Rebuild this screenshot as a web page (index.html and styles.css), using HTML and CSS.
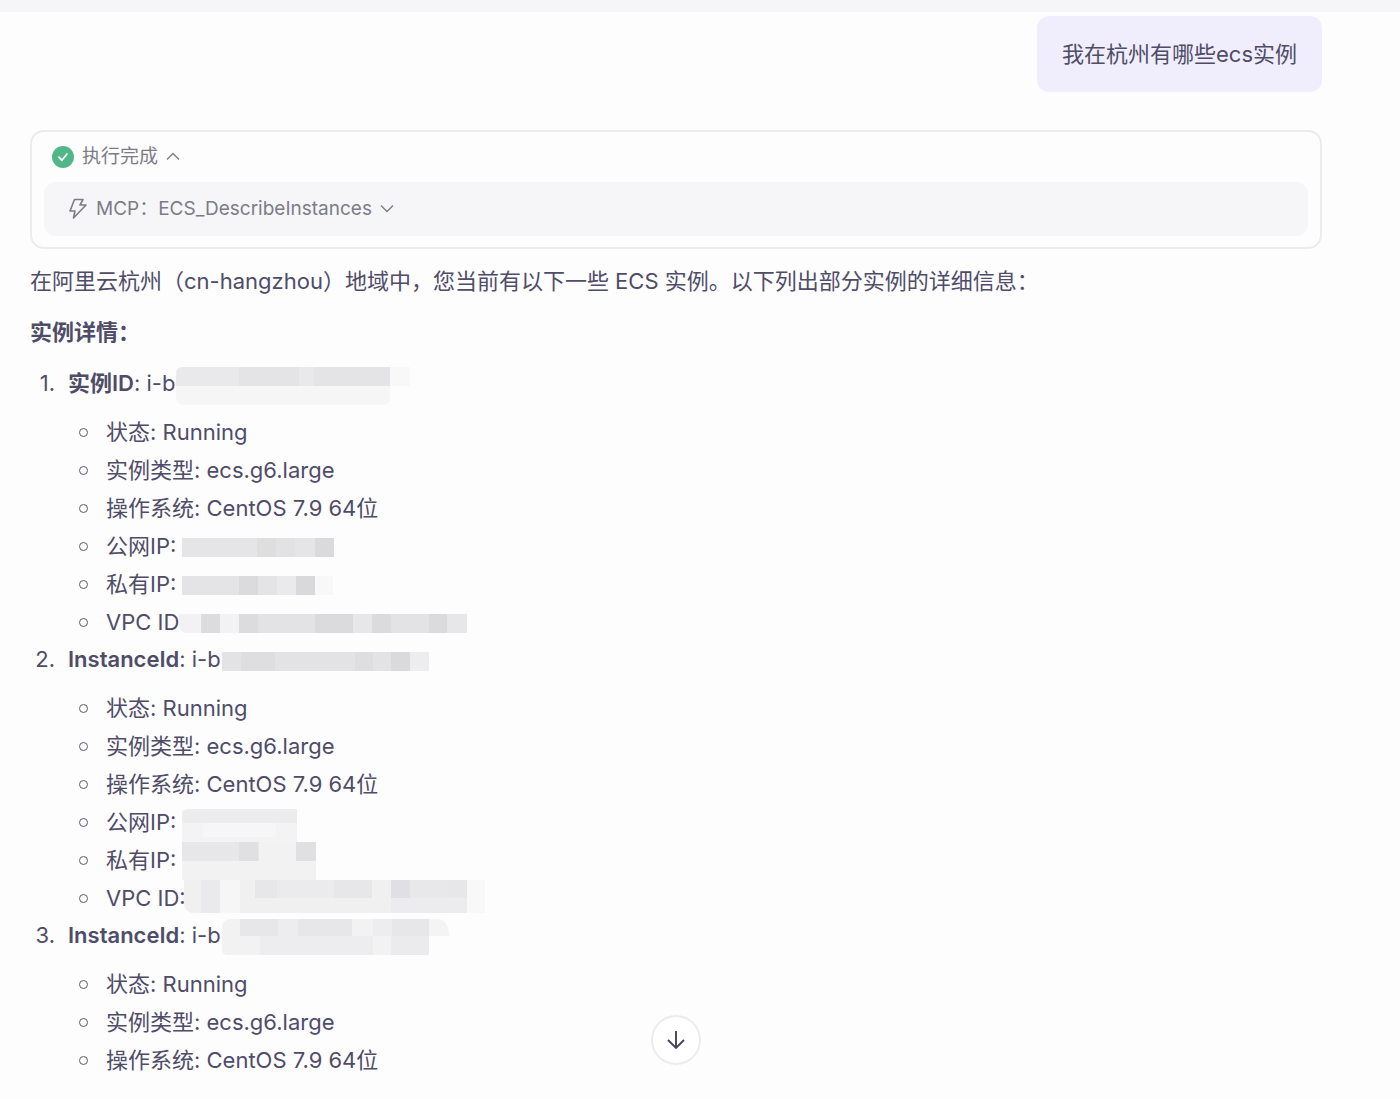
FILE: index.html
```html
<!DOCTYPE html>
<html lang="zh-CN">
<head>
<meta charset="UTF-8" />
<meta name="viewport" content="width=device-width, initial-scale=1" />
<title>ECS 实例</title>
<link rel="stylesheet" href="styles.css">
</head>
<body>

<header class="topbar"></header>

<main class="chat">
  <div class="question">我在杭州有哪些ecs实例</div>

  <section class="tool-card">
    <button class="status" type="button">
      <svg width="22" height="22" viewBox="0 0 22 22"><circle cx="11" cy="11" r="11" fill="#52b788"/><path d="M6.500 10.700l3.400 3.500 5.500-6.700" fill="none" stroke="#fff" stroke-width="1.700"/></svg>
      <span>执行完成</span>
      <svg width="14" height="14" viewBox="0 0 14 14"><path d="M1 9.500l6-6 6 6" fill="none" stroke="#7d7c86" stroke-width="1.400"/></svg>
    </button>
    <button class="tool" type="button">
      <svg width="20" height="22" viewBox="0 0 20 22"><path d="M6.500 1.500h8.500l-3 5.500h6L5.500 20l1.500-7H2z" fill="none" stroke="#7d7c86" stroke-width="1.600" stroke-linejoin="round"/></svg>
      <span>MCP：ECS_DescribeInstances</span>
      <svg width="14" height="14" viewBox="0 0 14 14"><path d="M1 3.500l6 6 6-6" fill="none" stroke="#7d7c86" stroke-width="1.400"/></svg>
    </button>
  </section>

  <div class="answer">
    <p>在阿里云杭州（cn-hangzhou）地域中，您当前有以下一些 ECS 实例。以下列出部分实例的详细信息：</p>
    <p><strong>实例详情：</strong></p>

    <ol class="instances">
      <li>
        <div class="name"><strong>实例ID</strong>: i-b<svg class="mask" width="236" height="38" viewBox="0 2 236 38"><path d="M8 4h208v19H1V11q0-7 7-7z" fill="#e9e9eb"/><path d="M1 23h214v12q0 7-7 7H8q-7 0-7-7z" fill="#f6f6f7"/><path d="M64 4h60v19H64zM139 4h76v19h-76z" fill="#e4e4e6"/><path d="M215 4h20v19h-20z" fill="#f8f8f9"/></svg></div>
        <ul>
          <li>状态: Running</li>
          <li>实例类型: ecs.g6.large</li>
          <li>操作系统: CentOS 7.9 64位</li>
          <li>公网IP:
            <svg class="mask" width="160" height="38" viewBox="0 0 160 38"><path d="M6 11h152v19H6z" fill="#e5e5e7"/><path d="M81 11h19v19H81z" fill="#dededf"/><path d="M100 11h19v19h-19z" fill="#e2e2e4"/><path d="M139 11h19v19h-19z" fill="#dadadc"/></svg>
          </li>
          <li>私有IP:
            <svg class="mask" width="160" height="38" viewBox="0 0 160 38"><path d="M6 11h134v19H6z" fill="#e4e4e6"/><path d="M63 11h19v19H63z" fill="#dbdbdd"/><path d="M101 11h19v19h-19z" fill="#eaeaec"/><path d="M120 11h19v19h-19z" fill="#d9d9db"/><path d="M139 11h18v19h-18z" fill="#f8f8f9"/></svg>
          </li>
          <li>VPC ID
            <svg class="mask" width="290" height="38" viewBox="2 0 290 38"><path d="M2 11h288v19H8q-6-4-6-9z" fill="#e3e3e5"/><path d="M2 11h22v19H8q-6-4-6-9zM43 11h19v19H43z" fill="#f2f2f4"/><path d="M24 11h19v19H24zM62 11h19v19H62z" fill="#dcdcde"/><path d="M138 11h38v19h-38zM195 11h19v19h-19zM252 11h18v19h-18z" fill="#dbdbdd"/><path d="M176 11h19v19h-19zM270 11h20v19h-20z" fill="#e7e7e9"/></svg>
          </li>
        </ul>
      </li>
      <li>
        <div class="name"><strong>InstanceId</strong>: i-b<svg class="mask" width="210" height="38" viewBox="0 0 210 38"><path d="M1 11h207v19H1z" fill="#e3e3e5"/><path d="M20 11h34v19H20zM134 11h18v19h-18z" fill="#dedee0"/><path d="M170 11h19v19h-19z" fill="#dadadc"/><path d="M189 11h19v19h-19z" fill="#ededef"/></svg></div>
        <ul>
          <li>状态: Running</li>
          <li>实例类型: ecs.g6.large</li>
          <li>操作系统: CentOS 7.9 64位</li>
          <li>公网IP:
            <svg class="mask" width="125" height="38" viewBox="0 0 125 38"><path d="M12 6h109v34H6V12q0-6 6-6z" fill="#f3f3f4"/><path d="M12 6h109v14H6v-8q0-6 6-6z" fill="#ececee"/><path d="M27 20h73v14H27z" fill="#f6f6f7"/></svg>
          </li>
          <li>私有IP:
            <svg class="mask" width="140" height="38" viewBox="0 0 140 38"><path d="M6 1h134v38H6z" fill="#f2f2f3"/><path d="M6 1h77v19H6z" fill="#e7e7e9"/><path d="M63 1h19v19H63z" fill="#e0e0e3"/><path d="M120 1h20v19h-20z" fill="#e0e0e2"/></svg>
          </li>
          <li>VPC ID:
            <svg class="mask" width="305" height="38" viewBox="4 0 305 38"><path d="M2 1h283v33H10q-8-2-8-10z" fill="#f0f0f1"/><path d="M19 1h19v33H19z" fill="#eaeaed"/><path d="M38 1h20v33H38z" fill="#f6f6f7"/><path d="M73 1h22v18H73zM152 1h38v18h-38zM266 1h19v18h-19z" fill="#e7e7e9"/><path d="M95 1h57v18H95z" fill="#ebebee"/><path d="M209 1h19v18h-19z" fill="#e0e0e4"/><path d="M228 1h38v18h-38z" fill="#e8e8ea"/><path d="M209 19h76v15h-76z" fill="#ececee"/><path d="M285 1h18v33h-18z" fill="#f8f8f9"/></svg>
          </li>
        </ul>
      </li>
      <li>
        <div class="name"><strong>InstanceId</strong>: i-b<svg class="mask" width="230" height="38" viewBox="0 2 230 38"><path d="M10 4h198v36H7q-6 0-6-6V13q0-9 9-9z" fill="#f2f2f3"/><path d="M19 4h38v17H19zM77 4h54v17H77zM171 4h37v17h-37z" fill="#e7e7e9"/><path d="M57 4h20v17H57zM152 4h19v17h-19z" fill="#ededef"/><path d="M39 21h113v19H39z" fill="#ededef"/><path d="M170 21h38v19h-38z" fill="#ebebee"/><path d="M208 4h10q10 2 10 17h-20z" fill="#f4f4f5"/></svg></div>
        <ul>
          <li>状态: Running</li>
          <li>实例类型: ecs.g6.large</li>
          <li>操作系统: CentOS 7.9 64位</li>
        </ul>
      </li>
    </ol>
  </div>
</main>

<div class="scroll-down">
  <button type="button" aria-label="滚动到底部">
    <svg width="20" height="20" viewBox="0 0 20 20"><path d="M10 1v17M2 10l8 8 8-8" fill="none" stroke="#45425f" stroke-width="1.900"/></svg>
  </button>
</div>

</body>
</html>
```
FILE: styles.css
```css
*,
*::before {
  box-sizing: border-box;
}
body {
  margin: 0;
  min-height: 100vh;
  background: #fdfdfe;
  color: #4f4c68;
  font-family: Inter, "Noto Sans CJK SC", sans-serif;
  font-size: 22px;
  line-height: 38px;
}
button {
  font: inherit;
  color: inherit;
  border: none;
  background: none;
  padding: 0;
  cursor: pointer;
}
svg {
  flex: none;
}
.topbar {
  height: 12px;
  background: #f6f6f9;
}
.chat {
  display: flex;
  flex-direction: column;
  padding: 4px 78px 0 30px;
}
.question {
  align-self: flex-end;
  padding: 19px 25px;
  border-radius: 12px;
  background: #f0eefc;
}

/* tool call card */
.tool-card {
  margin-top: 38px;
  padding: 0 12px 11px;
  border: 2px solid #ececee;
  border-radius: 14px;
  color: #7d7c86;
  font-size: 19px;
}
.status,
.tool {
  display: flex;
  align-items: center;
  gap: 8px;
}
.status {
  height: 50px;
  padding-left: 8px;
}
.tool {
  width: 100%;
  height: 54px;
  padding-left: 24px;
  border-radius: 12px;
  background: #f6f6f9;
}

/* answer text */
.answer p {
  margin: 13px 0 0;
}
strong {
  font-weight: 600;
}
.instances,
.instances ul {
  margin: 0;
  padding: 0;
  list-style: none;
}
.instances {
  margin-top: 14px;
  counter-reset: instance;
}
.instances > li {
  counter-increment: instance;
  padding-left: 38px;
}
.name {
  display: flex;
  height: 36px;
  line-height: 36px;
  margin-bottom: 12px;
  white-space: pre;
}
.name::before {
  content: counter(instance) ".";
  width: 38px;
  margin-left: -38px;
  padding-right: 13px;
  text-align: right;
}
.instances ul li {
  display: flex;
  align-items: center;
  height: 38px;
}
.instances ul li::before {
  content: "";
  width: 9px;
  height: 9px;
  margin: 0 18px 0 11px;
  border: 1px solid #5d5a70;
  border-radius: 50%;
}
.mask {
  overflow: visible;
}

.scroll-down {
  position: fixed;
  left: 30px;
  right: 78px;
  bottom: 34px;
  display: flex;
  justify-content: center;
  pointer-events: none;
}
.scroll-down button {
  display: flex;
  align-items: center;
  justify-content: center;
  width: 50px;
  height: 50px;
  border: 2px solid #ececf0;
  border-radius: 50%;
  background: #fff;
  pointer-events: auto;
}
```
